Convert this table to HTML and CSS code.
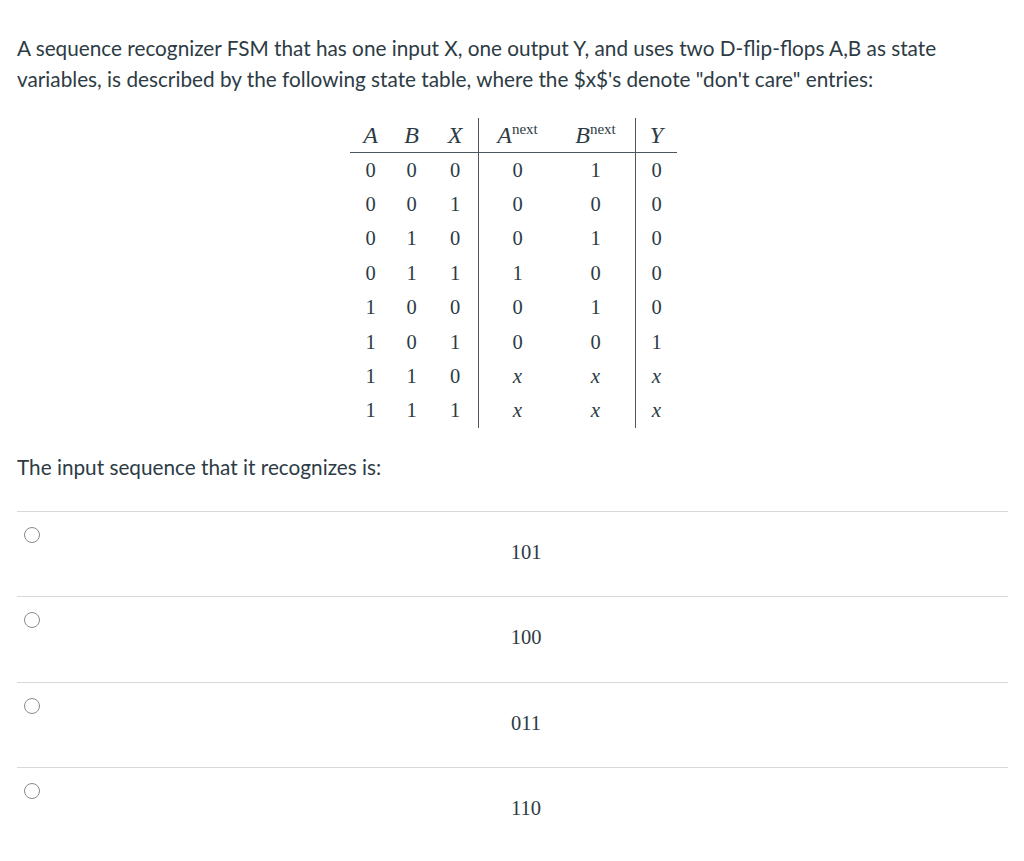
FILE: index.html
```html
<!DOCTYPE html>
<html>
<head>
<meta charset="utf-8">
<link rel="stylesheet" href="styles.css">
</head>
<body>
<div class="question">
  <p class="text intro">A sequence recognizer FSM that has one input X, one output Y, and uses two D-flip-flops A,B as state variables, is described by the following state table, where the $x$'s denote "don't care" entries:</p>
  <div class="math-wrap">
    <table class="state">
      <thead>
        <tr>
          <th class="c1"><span class="var">A</span></th><th class="c2"><span class="var">B</span></th><th class="c3 sep"><span class="var">X</span></th>
          <th class="c4"><span class="var">A</span><sup>next</sup></th><th class="c5 sep"><span class="var">B</span><sup>next</sup></th><th class="c6"><span class="var">Y</span></th>
        </tr>
      </thead>
      <tbody>
        <tr><td>0</td><td>0</td><td class="sep">0</td><td>0</td><td class="sep">1</td><td>0</td></tr>
        <tr><td>0</td><td>0</td><td class="sep">1</td><td>0</td><td class="sep">0</td><td>0</td></tr>
        <tr><td>0</td><td>1</td><td class="sep">0</td><td>0</td><td class="sep">1</td><td>0</td></tr>
        <tr><td>0</td><td>1</td><td class="sep">1</td><td>1</td><td class="sep">0</td><td>0</td></tr>
        <tr><td>1</td><td>0</td><td class="sep">0</td><td>0</td><td class="sep">1</td><td>0</td></tr>
        <tr><td>1</td><td>0</td><td class="sep">1</td><td>0</td><td class="sep">0</td><td>1</td></tr>
        <tr><td>1</td><td>1</td><td class="sep">0</td><td><span class="xvar">x</span></td><td class="sep"><span class="xvar">x</span></td><td><span class="xvar">x</span></td></tr>
        <tr><td>1</td><td>1</td><td class="sep">1</td><td><span class="xvar">x</span></td><td class="sep"><span class="xvar">x</span></td><td><span class="xvar">x</span></td></tr>
      </tbody>
    </table>
  </div>
  <p class="text prompt">The input sequence that it recognizes is:</p>
  <div class="answers">
    <label class="answer"><span class="radio"></span><span class="label">101</span></label>
    <label class="answer"><span class="radio"></span><span class="label">100</span></label>
    <label class="answer"><span class="radio"></span><span class="label">011</span></label>
    <label class="answer"><span class="radio"></span><span class="label">110</span></label>
  </div>
</div>
</body>
</html>
```
FILE: styles.css
```css
html, body {
  margin: 0;
  padding: 0;
  background: #ffffff;
}

.question {
  padding: 0 16px 0 17px;
  color: #2d3b45;
  font-family: Lato, "Open Sans", sans-serif;
}

.text {
  font-size: 20.75px;
  line-height: 31px;
  margin: 0;
}

.intro {
  padding-top: 33px;
}

.math-wrap {
  padding-top: 23px;
  padding-left: 333px;
}

.state {
  border-collapse: collapse;
  font-family: "Liberation Serif", "DejaVu Serif", serif;
  font-size: 20.5px;
  color: #2d3b45;
}

.state th,
.state td {
  padding: 0;
  text-align: center;
  height: 34.4px;
  font-weight: normal;
}

.state thead th {
  border-bottom: 1px solid #4a5560;
  height: 34px;
}

.state .var {
  font-style: italic;
  font-size: 24px;
}

.state .xvar {
  font-style: italic;
  font-size: 21px;
}

.state .sep {
  border-right: 1px solid #4a5560;
}

.state .c1 { width: 41px; }
.state .c2 { width: 41px; }
.state .c3 { width: 46px; }
.state .c4 { width: 77px; }
.state .c5 { width: 79px; }
.state .c6 { width: 41px; }

.state sup {
  font-size: 15px;
  font-style: normal;
  vertical-align: 9px;
  line-height: 0;
}

.prompt {
  padding-top: 24px;
}

.answers {
  margin-top: 28px;
}

.answer {
  display: flex;
  border-top: 1px solid #d8d8d8;
  height: 84.3px;
  box-sizing: content-box;
}

.radio {
  width: 14px;
  height: 14px;
  border: 1px solid #8a8a8a;
  border-radius: 50%;
  margin: 15px 0 0 7px;
  flex: none;
}

.label {
  flex: 1;
  text-align: center;
  font-family: "Liberation Serif", "DejaVu Serif", serif;
  font-size: 20.5px;
  padding-top: 29px;
  padding-left: 4px;
}
```
